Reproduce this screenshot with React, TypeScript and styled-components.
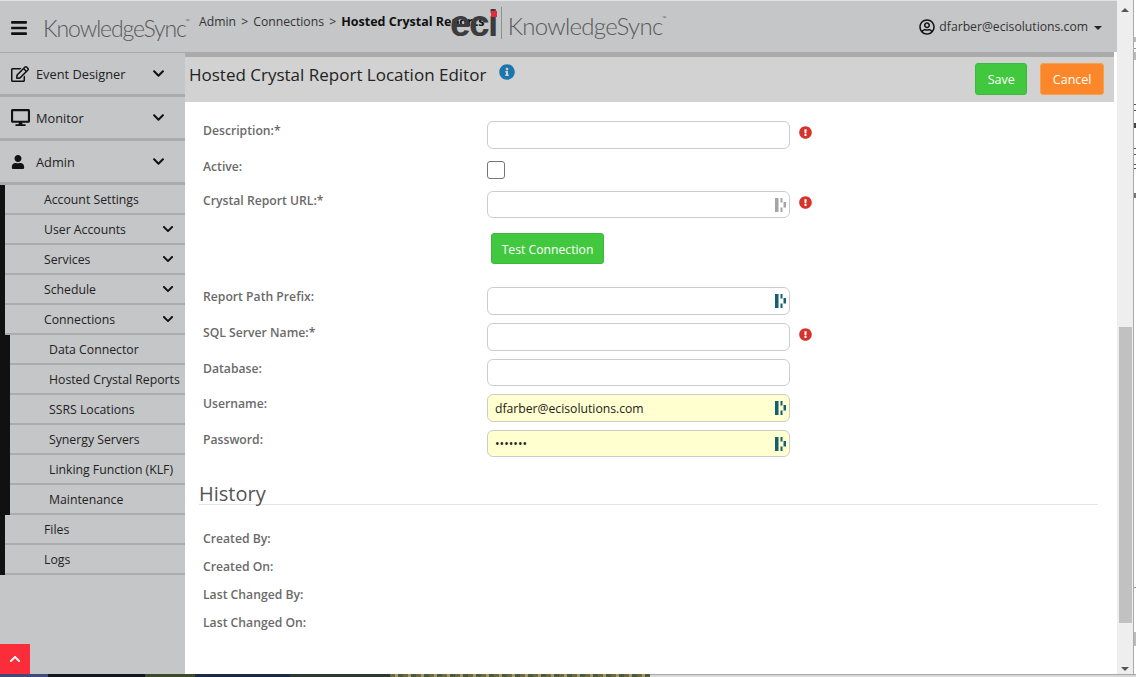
import * as React from "react";
import styled, { createGlobalStyle } from "styled-components";
import { FaRegEdit, FaDesktop, FaUser, FaInfoCircle, FaExclamationCircle, FaChevronDown, FaChevronUp, FaBars, FaRegUserCircle } from "react-icons/fa";

const GlobalStyle = createGlobalStyle`
	html, body {
		margin: 0;
		height: 100%;
		overflow: hidden;
		background: #fff;
		font-family: "Open Sans", "Liberation Sans", sans-serif;
	}
	* {
		box-sizing: border-box;
	}
`;

const Page = styled.div`
	width: 1136px;
	height: 677px;
	display: flex;
	background: #fff;
	overflow: hidden;
`;

const Window = styled.div`
	width: 1133px;
	height: 674px;
	display: flex;
`;

const AppArea = styled.div`
	width: 1117px;
	display: flex;
	flex-direction: column;
	border-top: 1px solid #e2e2e2;
`;

const TopBar = styled.header`
	position: relative;
	height: 51px;
	flex: none;
	display: flex;
	align-items: flex-start;
	background: #c5c6c8;
	padding: 0 0 0 10px;
`;

const Burger = styled.div`
	width: 18px;
	height: 18px;
	margin-top: 18px;
	color: #111;
	display: flex;
	align-items: center;
`;

const Logo = styled.span<{ $size: number; $track: number }>`
	font-family: Lato, "Open Sans", sans-serif;
	font-weight: 300;
	font-size: ${p => p.$size}px;
	letter-spacing: ${p => p.$track}px;
	color: #58595b;
	line-height: 1;
	white-space: nowrap;
`;

const SideLogo = styled.div`
	margin: 16px 0 0 15px;
	width: 156px;
	display: flex;
`;

const Breadcrumb = styled.div`
	margin: 12px 0 0 0;
	font-size: 12.2px;
	word-spacing: 2px;
	color: #333;
	line-height: 17px;
	white-space: nowrap;
	b {
		color: #111;
		font-weight: 700;
		font-size: 12.5px;
		word-spacing: 0;
	}
`;

const Brand = styled.div`
	position: absolute;
	left: 450px;
	top: 5px;
	height: 34px;
	display: flex;
	align-items: center;
`;

const EciMark = styled.span`
	position: relative;
	font-family: "Liberation Sans", sans-serif;
	font-weight: 700;
	font-size: 37px;
	letter-spacing: -1.6px;
	color: #3c3c3e;
	line-height: 1;
	padding-right: 4px;
	&::after {
		content: "";
		position: absolute;
		right: 4px;
		top: 6px;
		width: 6px;
		height: 6px;
		background: #e8293a;
	}
`;

const BrandRule = styled.span`
	width: 1px;
	height: 32px;
	background: #8f8f8f;
	margin: 0 6px 0 0;
`;

const BrandName = styled.div`
	margin-top: 6px;
	display: flex;
`;

const TM = styled.sup`
	font-size: 5px;
	margin: 0;
	line-height: 8px;
	vertical-align: top;
	color: #58595b;
`;

const UserMenu = styled.div`
	position: absolute;
	right: 15px;
	top: 17px;
	display: flex;
	align-items: center;
	gap: 4px;
	font-size: 12.2px;
	color: #333;
	svg {
		color: #111;
	}
`;

const Caret = styled.span`
	width: 0;
	height: 0;
	margin-left: 2px;
	margin-top: 2px;
	border-left: 4px solid transparent;
	border-right: 4px solid transparent;
	border-top: 4px solid #222;
`;

const Columns = styled.div`
	flex: 1;
	min-height: 0;
	display: flex;
`;

const Sidebar = styled.nav`
	width: 185px;
	flex: none;
	position: relative;
	background: #c5c6c8;
	border-top: 1px solid #aaa;
`;

const MainRow = styled.div`
	height: 44px;
	display: flex;
	align-items: center;
	padding: 0 20px 0 11px;
	border-bottom: 3px solid #aaabad;
	color: #222;
	font-size: 12.8px;
`;

const MainIcon = styled.span`
	width: 25px;
	display: flex;
	color: #111;
`;

const RowLabel = styled.span`
	flex: 1;
	white-space: nowrap;
`;

const SubGroup = styled.div`
	border-left: 5px solid #111;
`;

const SubRow = styled.div`
	height: 30px;
	display: flex;
	align-items: center;
	padding: 0 11px 0 39px;
	border-bottom: 2px solid #aaabad;
	color: #222;
	font-size: 12.25px;
`;

const NestedGroup = styled.div`
	border-left: 5px solid #111;
`;

const ToTop = styled.div`
	position: absolute;
	left: 0;
	bottom: 0;
	width: 30px;
	height: 30px;
	background: #fb2d3a;
	color: #fff;
	display: flex;
	align-items: center;
	justify-content: center;
`;

const Main = styled.main`
	flex: 1;
	min-width: 0;
	background: #fff;
`;

const TitleBar = styled.div`
	width: 929px;
	height: 50px;
	display: flex;
	align-items: flex-start;
	background: #d2d2d2;
	border-top: 5px solid #aaa;
	padding: 0 10px 0 4px;
	box-shadow: 0 -1px 0 #fff;
`;

const Title = styled.h1`
	margin: 5px 0 0;
	font-size: 17px;
	font-weight: 400;
	line-height: 26px;
	color: #222;
	white-space: nowrap;
`;

const InfoIcon = styled.span`
	margin: 7px 0 0 13px;
	display: flex;
	color: #1a76ad;
`;

const TitleActions = styled.div`
	margin: 6px 0 0 auto;
	display: flex;
	gap: 13px;
`;

const Button = styled.button<{ $tone: "green" | "orange" }>`
	height: 32px;
	padding: 0 11.5px;
	border-radius: 3px;
	border: 1px solid ${p => (p.$tone === "green" ? "#3cb93c" : "#f5a04a")};
	background: ${p => (p.$tone === "green" ? "#41c83e" : "#fb872a")};
	color: #fff;
	font-family: inherit;
	font-size: 12.5px;
`;

const Form = styled.form`
	padding: 19px 0 0 18px;
`;

const Field = styled.div<{ $h: number; $gap?: number }>`
	display: grid;
	grid-template-columns: 284px 303px auto;
	height: ${p => p.$h}px;
	margin-bottom: ${p => p.$gap ?? 8}px;
	align-items: start;
`;

const Label = styled.label`
	font-size: 12.2px;
	font-weight: 600;
	color: #6a6a6a;
	line-height: 18px;
`;

const FieldLabel = styled(Label)`
	margin-top: 1px;
`;

const ActiveLabel = styled(Label)`
	margin-top: -3px;
`;

const InputBox = styled.div<{ $filled?: boolean }>`
	position: relative;
	height: 100%;
	display: flex;
	align-items: center;
	padding: 0 7px;
	border: 1px solid #ccc;
	border-radius: 6px;
	background: ${p => (p.$filled ? "#ffffcf" : "#fff")};
	font-size: 12.2px;
	color: #222;
`;

const PassIcon = styled.svg`
	position: absolute;
	right: 2px;
	top: 50%;
	margin-top: -8px;
`;

const ErrorMark = styled.span`
	margin: 5px 0 0 9px;
	display: flex;
	color: #d4342c;
`;

const CheckBox = styled.span`
	display: block;
	width: 18px;
	height: 18px;
	border: 1px solid #767676;
	border-radius: 3px;
	background: #fff;
`;

const TestButton = styled(Button)`
	height: 31px;
	width: 113px;
	margin-left: 4px;
	padding: 2px 0 0;
	font-size: 12.2px;
`;

const History = styled.h2`
	margin: 24px 19px 0 14px;
	height: 24px;
	border-bottom: 1px solid #e4e4e4;
	font-size: 20px;
	font-weight: 400;
	color: #555;
	line-height: 25px;
`;

const HistoryList = styled.div`
	padding: 25px 0 0 18px;
	display: flex;
	flex-direction: column;
	gap: 10px;
`;

const Scrollbar = styled.div`
	width: 16px;
	flex: none;
	position: relative;
	background: #eee;
`;

const Thumb = styled.div`
	position: absolute;
	left: 2px;
	right: 1px;
	top: 327px;
	height: 296px;
	background: #c1c1c1;
`;

const Arrow = styled.span<{ $up?: boolean }>`
	position: absolute;
	left: 4px;
	${p => (p.$up ? "top: 8px;" : "bottom: 3px;")}
	width: 0;
	height: 0;
	border-left: 4px solid transparent;
	border-right: 4px solid transparent;
	${p => (p.$up ? "border-bottom: 4px solid #555;" : "border-top: 4px solid #555;")}
`;

const Backdrop = styled.div`
	position: absolute;
	left: 0;
	top: 674px;
	width: 1136px;
	height: 3px;
	background:
		linear-gradient(90deg, #3f4a78 0 48px, #14161e 48px 145px, #3d4a2a 145px 195px, #1c2a4a 195px 290px, #2a3a30 290px 390px, transparent 390px),
		repeating-linear-gradient(90deg, #6b6a3e 0 5px, #a39a6a 5px 8px, #4d5a3a 8px 13px) 390px 0 / 260px 100% no-repeat,
		linear-gradient(180deg, #a8a8a8 0 1px, #d8d8d8 1px);
`;

const RightEdge = styled.div`
	flex: 1;
	height: 674px;
	border-left: 1px solid #aaa;
	background: linear-gradient(
		180deg,
		#fff 0 37px, #bbb 37px 42px,
		#fff 42px 48px, #999 48px 49px,
		#fff 49px 52px, #bbb 52px 60px,
		#fff 60px 104px, #555 104px 105px,
		#fff 105px 110px, #555 110px 111px,
		#fff 111px 123px, #444 123px 128px,
		#fff 128px 148px, #555 148px 149px,
		#fff 149px 154px, #555 154px 155px,
		#fff 155px 164px, #555 164px 165px,
		#fff 165px 168px, #555 168px 169px,
		#fff 169px 193px, #777 193px 198px,
		#fff 198px 587px, #999 587px 588px,
		#fff 588px 632px, #bbb 632px 646px,
		#fff 646px
	);
`;

function KeeperIcon({ active }: { active?: boolean }) {
	const color = active ? "#14606f" : "#a5a5a5";
	return (
		<PassIcon width="13" height="16" viewBox="0 0 13 16">
			<rect x="1" y="1" width="3.5" height="14" fill={color} />
			<rect x="6.5" y="1" width="2" height="4.5" fill={color} />
			<rect x="6.5" y="10.5" width="2" height="4.5" fill={color} />
			<rect x="9.5" y="5" width="2.5" height="5.5" fill={color} />
		</PassIcon>
	);
}

function Err() {
	return (
		<ErrorMark>
			<FaExclamationCircle size={13} />
		</ErrorMark>
	);
}

function SubItem({ label, more }: { label: string; more?: boolean }) {
	return (
		<SubRow>
			<RowLabel>{label}</RowLabel>
			{more && <FaChevronDown size={12} color="#111" />}
		</SubRow>
	);
}

export default function App() {
	return (
		<Page>
			<GlobalStyle />
			<Window>
				<AppArea>
					<TopBar>
						<Burger>
							<FaBars size={18} />
						</Burger>
						<SideLogo>
							<Logo $size={23} $track={-1.1}>KnowledgeSync</Logo>
							<TM>™</TM>
						</SideLogo>
						<Breadcrumb>
							Admin &gt; Connections &gt; <b>Hosted Crystal Reports</b>
						</Breadcrumb>
						<Brand>
							<EciMark>eci</EciMark>
							<BrandRule />
							<BrandName>
								<Logo $size={24} $track={-0.7}>KnowledgeSync</Logo>
								<TM>™</TM>
							</BrandName>
						</Brand>
						<UserMenu>
							<FaRegUserCircle size={16} />
							dfarber@ecisolutions.com
							<Caret />
						</UserMenu>
					</TopBar>
					<Columns>
						<Sidebar>
							<MainRow>
								<MainIcon>
									<FaRegEdit size={18} />
								</MainIcon>
								<RowLabel>Event Designer</RowLabel>
								<FaChevronDown size={13} color="#111" />
							</MainRow>
							<MainRow>
								<MainIcon>
									<FaDesktop size={19} />
								</MainIcon>
								<RowLabel>Monitor</RowLabel>
								<FaChevronDown size={13} color="#111" />
							</MainRow>
							<MainRow>
								<MainIcon>
									<FaUser size={14} />
								</MainIcon>
								<RowLabel>Admin</RowLabel>
								<FaChevronDown size={13} color="#111" />
							</MainRow>
							<SubGroup>
								<SubItem label="Account Settings" />
								<SubItem label="User Accounts" more />
								<SubItem label="Services" more />
								<SubItem label="Schedule" more />
								<SubItem label="Connections" more />
								<NestedGroup>
									<SubItem label="Data Connector" />
									<SubItem label="Hosted Crystal Reports" />
									<SubItem label="SSRS Locations" />
									<SubItem label="Synergy Servers" />
									<SubItem label="Linking Function (KLF)" />
									<SubItem label="Maintenance" />
								</NestedGroup>
								<SubItem label="Files" />
								<SubItem label="Logs" />
							</SubGroup>
							<ToTop>
								<FaChevronUp size={12} />
							</ToTop>
						</Sidebar>
						<Main>
							<TitleBar>
								<Title>Hosted Crystal Report Location Editor</Title>
								<InfoIcon>
									<FaInfoCircle size={16} />
								</InfoIcon>
								<TitleActions>
									<Button $tone="green" type="button">
										Save
									</Button>
									<Button $tone="orange" type="button">
										Cancel
									</Button>
								</TitleActions>
							</TitleBar>
							<Form>
								<Field $h={28} $gap={12}>
									<FieldLabel>Description:*</FieldLabel>
									<InputBox />
									<Err />
								</Field>
								<Field $h={18} $gap={12}>
									<ActiveLabel>Active:</ActiveLabel>
									<CheckBox />
								</Field>
								<Field $h={27} $gap={15}>
									<FieldLabel>Crystal Report URL:*</FieldLabel>
									<InputBox>
										<KeeperIcon />
									</InputBox>
									<Err />
								</Field>
								<Field $h={31} $gap={23}>
									<span />
									<TestButton $tone="green" type="button">
										Test Connection
									</TestButton>
								</Field>
								<Field $h={28}>
									<FieldLabel>Report Path Prefix:</FieldLabel>
									<InputBox>
										<KeeperIcon active />
									</InputBox>
								</Field>
								<Field $h={28}>
									<FieldLabel>SQL Server Name:*</FieldLabel>
									<InputBox />
									<Err />
								</Field>
								<Field $h={27}>
									<FieldLabel>Database:</FieldLabel>
									<InputBox />
								</Field>
								<Field $h={28}>
									<FieldLabel>Username:</FieldLabel>
									<InputBox $filled>
										dfarber@ecisolutions.com
										<KeeperIcon active />
									</InputBox>
								</Field>
								<Field $h={27} $gap={0}>
									<FieldLabel>Password:</FieldLabel>
									<InputBox $filled>
										•••••••
										<KeeperIcon active />
									</InputBox>
								</Field>
							</Form>
							<History>History</History>
							<HistoryList>
								<Label>Created By:</Label>
								<Label>Created On:</Label>
								<Label>Last Changed By:</Label>
								<Label>Last Changed On:</Label>
							</HistoryList>
						</Main>
					</Columns>
				</AppArea>
				<Scrollbar>
					<Arrow $up />
					<Thumb />
					<Arrow />
				</Scrollbar>
			</Window>
			<RightEdge />
			<Backdrop />
		</Page>
	);
}
